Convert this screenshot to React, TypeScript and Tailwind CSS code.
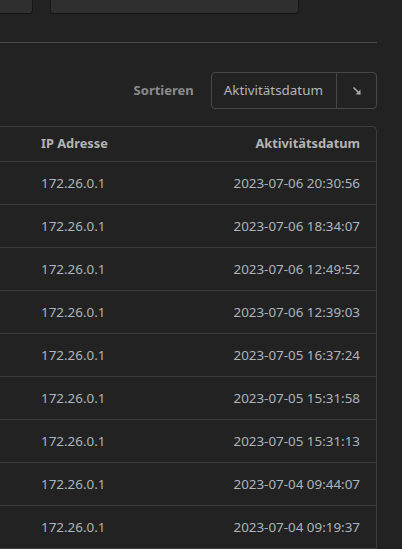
import React from "react";

const rows = [
  "2023-07-06 20:30:56",
  "2023-07-06 18:34:07",
  "2023-07-06 12:49:52",
  "2023-07-06 12:39:03",
  "2023-07-05 16:37:24",
  "2023-07-05 15:31:58",
  "2023-07-05 15:31:13",
  "2023-07-04 09:44:07",
  "2023-07-04 09:19:37",
];

export default function App() {
  return (
    <div
      className="w-[402px] h-[549px] overflow-hidden bg-[#222222] text-[13.4px]"
      style={{ fontFamily: '"Noto Sans", "Open Sans", sans-serif' }}
    >
      <div className="pr-[25px]">
        <div className="flex gap-[17px] h-[14px]">
          <div className="w-[33px] h-full bg-[#2f2f2f] border-r border-b border-[#161616] rounded-br-[4px]" />
          <div className="w-[249px] h-full bg-[#2f2f2f] border-x border-b border-[#161616] rounded-b-[4px]" />
        </div>
        <div className="mt-[28px] h-px bg-[#4a4a4a]" />
        <div className="mt-[29px] flex items-center justify-end gap-[17px]">
          <span className="font-bold text-[13px] text-[#8c8c8c]">Sortieren</span>
          <div className="flex h-[37px] border border-[#474747] rounded-[4px]">
            <div className="flex items-center pl-[12px] pr-[13px] text-[#b0b6bc] border-r border-[#474747]">
              Aktivitätsdatum
            </div>
            <div className="w-[39px] flex items-center justify-center">
              <svg width="10" height="10" viewBox="0 0 10 10" fill="none">
                <path d="M1.5 1.5L8 8" stroke="#a8a8a8" strokeWidth="1.6" />
                <path d="M8.5 3.5V8.5H3.5Z" fill="#a8a8a8" />
              </svg>
            </div>
          </div>
        </div>
        <div className="mt-[17px] border-t border-r border-[#3c3c3c] rounded-tr-[5px]">
          <div className="flex items-center h-[35px] font-bold text-[12.8px] text-[#b4b4b4] border-b border-[#3c3c3c]">
            <div className="pl-[41px] flex-1">IP Adresse</div>
            <div className="pr-[16px]">Aktivitätsdatum</div>
          </div>
          {rows.map((d, i) => (
            <div
              key={i}
              className="flex items-center h-[43px] text-[#aeb4ba] border-b border-[#3c3c3c]"
            >
              <div className="pl-[41px] flex-1">172.26.0.1</div>
              <div className="pr-[16px]">{d}</div>
            </div>
          ))}
        </div>
      </div>
    </div>
  );
}
